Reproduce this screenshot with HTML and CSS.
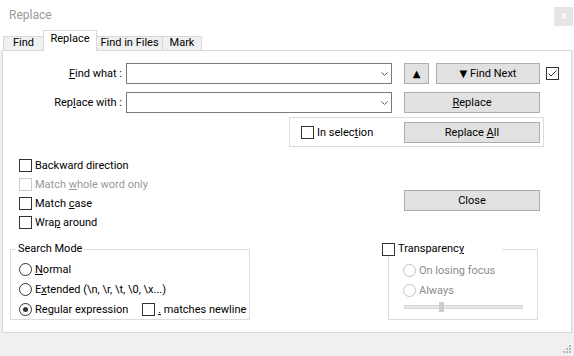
FILE: index.html
```html
<!DOCTYPE html>
<html>
<head>
    <title>Replace</title>
    <link rel="stylesheet" href="styles.css">
</head>
<body>
<div class="titlebar">
    <span class="title">Replace</span>
    <span class="close-box">x</span>
</div>
<div class="tabs">
    <span class="tab tab-find">Find</span>
    <span class="tab tab-replace active">Replace</span>
    <span class="tab tab-files">Find in Files</span>
    <span class="tab tab-mark">Mark</span>
</div>
<div class="main">
    <div class="panel">
        <div class="row row-find">
            <span class="field-label"><u>F</u>ind what :</span>
            <span class="combo">
                <svg class="chev" width="7" height="4" viewBox="0 0 7 4"><polyline points="0.5,0.5 3.5,3.5 6.5,0.5"/></svg>
            </span>
            <button class="btn btn-up"><span class="arrow">▲</span></button>
            <button class="btn btn-next"><span class="arrow">▼</span> Find Next</button>
            <span class="box box-checked">
                <svg width="11" height="11" viewBox="0 0 11 11"><polyline points="1.5,5.5 4,8 9.5,2.5"/></svg>
            </span>
        </div>
        <div class="row row-replace">
            <span class="field-label">Rep<u>l</u>ace with :</span>
            <span class="combo">
                <svg class="chev" width="7" height="4" viewBox="0 0 7 4"><polyline points="0.5,0.5 3.5,3.5 6.5,0.5"/></svg>
            </span>
            <button class="btn btn-wide"><u>R</u>eplace</button>
        </div>
        <div class="sel-group">
            <label class="check"><span class="box"></span><span>In selec<u>t</u>ion</span></label>
            <button class="btn btn-wide">Replace <u>A</u>ll</button>
        </div>
        <div class="options">
            <div class="check-list">
                <label class="check"><span class="box"></span><span>Backward direction</span></label>
                <label class="check disabled"><span class="box"></span><span>Match <u>w</u>hole word only</span></label>
                <label class="check"><span class="box"></span><span>Match <u>c</u>ase</span></label>
                <label class="check"><span class="box"></span><span>Wra<u>p</u> around</span></label>
            </div>
            <button class="btn btn-wide btn-close">Close</button>
        </div>
        <div class="bottom">
            <fieldset class="group search-mode">
                <legend>Search Mode</legend>
                <label class="radio"><span class="dot"></span><span><u>N</u>ormal</span></label>
                <label class="radio"><span class="dot"></span><span>E<u>x</u>tended (\n, \r, \t, \0, \x...)</span></label>
                <div class="radio-row">
                    <label class="radio radio-regex"><span class="dot on"></span><span>Re<u>g</u>ular expression</span></label>
                    <label class="check"><span class="box"></span><span><u>.</u> matches newline</span></label>
                </div>
            </fieldset>
            <fieldset class="group transp">
                <legend><label class="check"><span class="box"></span><span>Transparenc<u>y</u></span></label></legend>
                <label class="radio disabled"><span class="dot"></span><span>On losing focus</span></label>
                <label class="radio disabled"><span class="dot"></span><span>Always</span></label>
                <div class="slider"><span class="thumb"></span></div>
            </fieldset>
        </div>
    </div>
    <div class="footer">
        <svg class="grip" width="9" height="9" viewBox="0 0 9 9">
            <rect x="6" y="0" width="2" height="2"/>
            <rect x="3" y="3" width="2" height="2"/>
            <rect x="6" y="3" width="2" height="2"/>
            <rect x="0" y="6" width="2" height="2"/>
            <rect x="3" y="6" width="2" height="2"/>
            <rect x="6" y="6" width="2" height="2"/>
        </svg>
    </div>
</div>
</body>
</html>
```

FILE: styles.css
```css
* {
    box-sizing: border-box;
}

body {
    margin: 0;
    width: 574px;
    height: 356px;
    overflow: hidden;
    background: #fff;
    font-family: Roboto, "Liberation Sans", sans-serif;
    font-size: 11px;
    line-height: 13px;
    color: #000;
}

u {
    text-decoration: underline;
    text-decoration-thickness: 1px;
    text-underline-offset: 1px;
}

/* title bar */
.titlebar {
    height: 30px;
    display: flex;
    justify-content: space-between;
    align-items: flex-start;
    padding: 0 1px 0 9px;
}

.title {
    font-size: 12px;
    line-height: 30px;
    color: #9a9a9a;
}

.close-box {
    margin-top: 7px;
    width: 19px;
    height: 19px;
    background: #e5e5e5;
    color: #fafafa;
    font-size: 10px;
    font-weight: bold;
    line-height: 18px;
    text-align: center;
}

/* tabs */
.tabs {
    height: 20px;
    display: flex;
    align-items: flex-end;
    padding-left: 3px;
    position: relative;
    z-index: 1;
}

.tab {
    height: 14px;
    border: 1px solid #d9d9d9;
    border-bottom: none;
    background: #f0f0f0;
    text-align: center;
    line-height: 11px;
}

.tab + .tab {
    margin-left: -1px;
}

.tab-find { width: 41px; }
.tab-replace { width: 54px; }
.tab-files { width: 67px; }
.tab-mark { width: 40px; }

.tab.active {
    height: 21px;
    margin-bottom: -1px;
    background: #fff;
    padding-top: 2px;
}

/* main area */
.main {
    height: 306px;
    background: #f0f0f0;
    padding-left: 2px;
}

.panel {
    width: 570px;
    height: 283px;
    background: #fff;
    border: 1px solid #d9d9d9;
}

.footer {
    height: 23px;
    display: flex;
    justify-content: flex-end;
    align-items: flex-start;
    padding: 12px 2px 0 0;
}

.grip {
    fill: #b8b8b8;
}

/* top rows */
.row {
    display: flex;
    align-items: center;
    height: 21px;
}

.row-find {
    margin-top: 12px;
}

.row-replace {
    margin-top: 8px;
}

.field-label {
    width: 119px;
    margin-right: 4px;
    text-align: right;
}

.combo {
    width: 266px;
    height: 21px;
    margin-right: 12px;
    border: 1px solid #7a7a7a;
    background: #fff;
    display: flex;
    align-items: center;
    justify-content: flex-end;
    padding-right: 3px;
}

.chev {
    fill: none;
    stroke: #606060;
    stroke-width: 1;
}

.btn {
    height: 21px;
    padding: 0;
    border: 1px solid #adadad;
    background: #e1e1e1;
    font: inherit;
    color: #000;
    line-height: 19px;
    text-align: center;
}

.btn-up {
    width: 25px;
}

.btn-next {
    width: 104px;
    margin-left: 7px;
}

.btn-wide {
    width: 136px;
}

.arrow {
    font-family: "DejaVu Sans", sans-serif;
    font-size: 10px;
}

.row-find .box {
    margin-left: 6px;
}

.box-checked svg {
    display: block;
    fill: none;
    stroke: #333;
    stroke-width: 1;
}

.sel-group {
    margin: 4px 0 0 286px;
    width: 255px;
    height: 30px;
    border: 1px solid #dcdcdc;
    display: flex;
    align-items: center;
    justify-content: space-between;
    padding: 0 3px 0 11px;
}

/* checkboxes and radios */
.check {
    display: flex;
    align-items: center;
    height: 19px;
}

.box {
    flex: none;
    width: 13px;
    height: 13px;
    margin-right: 3px;
    border: 1px solid #333;
    background: #fff;
}

.check.disabled {
    color: #999;
}

.check.disabled .box {
    border-color: #ccc;
}

.options {
    display: flex;
    margin-top: 9px;
}

.check-list {
    width: 401px;
    padding-left: 16px;
}

.btn-close {
    margin-top: 34px;
}

.bottom {
    display: flex;
    align-items: flex-start;
    margin-top: 10px;
}

.group {
    margin: 0;
    min-width: 0;
    border: 1px solid #dcdcdc;
}

.group legend {
    line-height: 14px;
}

.search-mode {
    margin-left: 7px;
    width: 240px;
    padding: 3px 0 0 8px;
}

.search-mode legend {
    margin-left: -3px;
    padding: 0 2px;
}

.radio {
    display: flex;
    align-items: center;
    height: 20px;
}

.dot {
    flex: none;
    width: 13px;
    height: 13px;
    margin-right: 3px;
    border: 1px solid #333;
    border-radius: 50%;
    background: #fff;
    display: flex;
    align-items: center;
    justify-content: center;
}

.dot.on::after {
    content: "";
    width: 5px;
    height: 5px;
    border-radius: 50%;
    background: #333;
}

.radio-row {
    display: flex;
    align-items: center;
}

.radio-regex {
    width: 123px;
}

.transp {
    margin-left: 138px;
    width: 150px;
    padding: 4px 0 5px 14px;
}

.transp legend {
    margin-left: -21px;
    padding: 0;
    background: #fff;
}

.transp legend .check {
    width: 120px;
    height: 14px;
}

.radio.disabled {
    color: #8c8c8c;
}

.radio.disabled .dot {
    border-color: #c4c4c4;
}

.slider {
    position: relative;
    width: 119px;
    height: 14px;
    margin-left: 1px;
    background: linear-gradient(#d6d6d6, #d6d6d6) 0 5px / 119px 4px no-repeat;
}

.slider::before {
    content: "";
    display: block;
    position: absolute;
    left: 1px;
    top: 6px;
    width: 117px;
    height: 2px;
    background: #e7eaea;
}

.thumb {
    position: absolute;
    left: 35px;
    top: 2px;
    width: 5px;
    height: 10px;
    background: #cdcdcd;
}
```
